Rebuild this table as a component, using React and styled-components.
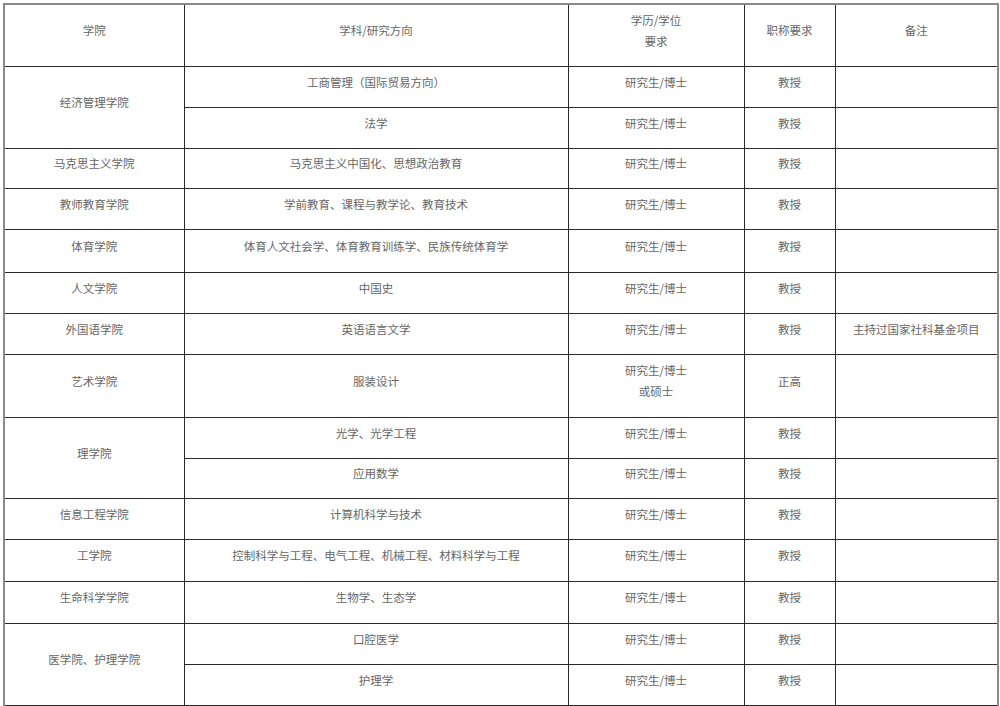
import React from "react";
import styled, { createGlobalStyle } from "styled-components";

const GlobalStyle = createGlobalStyle`
  html, body {
    margin: 0;
    padding: 0;
    background: #fff;
  }
  body {
    font-family: "Noto Sans CJK SC", "Liberation Sans", sans-serif;
  }
`;

const rows = [
  { college: "经济管理学院", span: 2, subject: "工商管理（国际贸易方向）", degree: ["研究生/博士"], title: "教授", note: "", h: 41 },
  { subject: "法学", degree: ["研究生/博士"], title: "教授", note: "", h: 41 },
  { college: "马克思主义学院", subject: "马克思主义中国化、思想政治教育", degree: ["研究生/博士"], title: "教授", note: "", h: 40 },
  { college: "教师教育学院", subject: "学前教育、课程与教学论、教育技术", degree: ["研究生/博士"], title: "教授", note: "", h: 41 },
  { college: "体育学院", subject: "体育人文社会学、体育教育训练学、民族传统体育学", degree: ["研究生/博士"], title: "教授", note: "", h: 43 },
  { college: "人文学院", subject: "中国史", degree: ["研究生/博士"], title: "教授", note: "", h: 41 },
  { college: "外国语学院", subject: "英语语言文学", degree: ["研究生/博士"], title: "教授", note: "主持过国家社科基金项目", h: 41 },
  { college: "艺术学院", subject: "服装设计", degree: ["研究生/博士", "或硕士"], title: "正高", note: "", h: 63 },
  { college: "理学院", span: 2, subject: "光学、光学工程", degree: ["研究生/博士"], title: "教授", note: "", h: 41 },
  { subject: "应用数学", degree: ["研究生/博士"], title: "教授", note: "", h: 40 },
  { college: "信息工程学院", subject: "计算机科学与技术", degree: ["研究生/博士"], title: "教授", note: "", h: 41 },
  { college: "工学院", subject: "控制科学与工程、电气工程、机械工程、材料科学与工程", degree: ["研究生/博士"], title: "教授", note: "", h: 42 },
  { college: "生命科学学院", subject: "生物学、生态学", degree: ["研究生/博士"], title: "教授", note: "", h: 42 },
  { college: "医学院、护理学院", span: 2, subject: "口腔医学", degree: ["研究生/博士"], title: "教授", note: "", h: 41 },
  { subject: "护理学", degree: ["研究生/博士"], title: "教授", note: "", h: 41 },
];

function App() {
  return (
    <>
      <GlobalStyle />
      <Page>
        <Table>
          <colgroup>
            <col style={{ width: 180 }} />
            <col style={{ width: 384 }} />
            <col style={{ width: 176 }} />
            <col style={{ width: 91 }} />
            <col style={{ width: 163 }} />
          </colgroup>
          <thead>
            <Row h={62}>
              <HeadCell>学院</HeadCell>
              <HeadCell>学科/研究方向</HeadCell>
              <HeadCell>
                <Line>学历/学位</Line>
                <Line>要求</Line>
              </HeadCell>
              <HeadCell>职称要求</HeadCell>
              <HeadCell>备注</HeadCell>
            </Row>
          </thead>
          <tbody>
            {rows.map((r, i) => (
              <Row key={i} h={r.h}>
                {r.college && <Cell rowSpan={r.span || 1}>{r.college}</Cell>}
                <Cell>{r.subject}</Cell>
                <Cell>
                  {r.degree.map((d, j) => (
                    <Line key={j}>{d}</Line>
                  ))}
                </Cell>
                <Cell>{r.title}</Cell>
                <Cell>{r.note}</Cell>
              </Row>
            ))}
          </tbody>
        </Table>
      </Page>
    </>
  );
}

export default App;

const Page = styled.div`
  padding: 3px 2px 0 3px;
  width: 1000px;
  height: 706px;
  box-sizing: border-box;
  overflow: hidden;
`;

const Table = styled.table`
  width: 995px;
  table-layout: fixed;
  border-collapse: collapse;
  border-top: 2px solid #8a8a8a;
  border-left: 2px solid #8a8a8a;
  border-right: 2px solid #8a8a8a;
  border-bottom: 1px solid #222;
`;

const Row = styled.tr`
  height: ${(p) => p.h}px;
`;

const Cell = styled.td`
  border: 1px solid #2a2a2a;
  padding: 0 4px 9px;
  text-align: center;
  vertical-align: middle;
  font-size: 11.5px;
  line-height: 21px;
  color: #666;
  white-space: nowrap;
`;

const HeadCell = styled(Cell).attrs({ as: "th" })`
  font-weight: normal;
`;

const Line = styled.div`
  display: block;
`;
